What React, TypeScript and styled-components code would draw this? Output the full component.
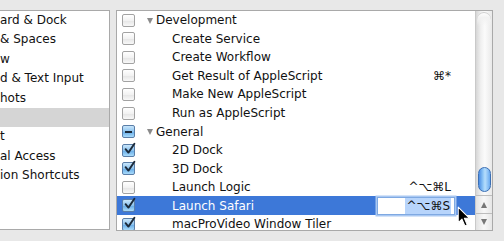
import * as React from 'react';
import styled, { createGlobalStyle } from 'styled-components';

const GlobalStyle = createGlobalStyle`
  html, body {
    margin: 0;
    padding: 0;
    background: #e8e8e8;
    overflow: hidden;
  }
  body {
    font-family: 'DejaVu Sans', 'Liberation Sans', sans-serif;
    font-size: 12px;
    color: #111;
  }
`;

// the sidebar is scrolled sideways, only the tail of each name is in view
const categories = [
  'ard & Dock',
  '& Spaces',
  'w',
  'd & Text Input',
  'hots',
  '',
  't',
  'al Access',
  'ion Shortcuts',
];

type Check = 'off' | 'on' | 'mixed';

type Item = {
  label: string;
  check: Check;
  group?: boolean;
  shortcut?: string;
  selected?: boolean;
  editing?: boolean;
};

const items: Item[] = [
  { label: 'Development', check: 'off', group: true },
  { label: 'Create Service', check: 'off' },
  { label: 'Create Workflow', check: 'off' },
  { label: 'Get Result of AppleScript', check: 'off', shortcut: '⌘*' },
  { label: 'Make New AppleScript', check: 'off' },
  { label: 'Run as AppleScript', check: 'off' },
  { label: 'General', check: 'mixed', group: true },
  { label: '2D Dock', check: 'on' },
  { label: '3D Dock', check: 'on' },
  { label: 'Launch Logic', check: 'off', shortcut: '^⌥⌘L' },
  { label: 'Launch Safari', check: 'on', shortcut: '^⌥⌘S', selected: true, editing: true },
  { label: 'macProVideo Window Tiler', check: 'on' },
];

const CheckBox = ({ state }: { state: Check }) => (
  <Box $on={state !== 'off'}>
    {state === 'on' && (
      <svg width="13" height="13" viewBox="0 0 13 13">
        <path d="M2.6 6.2 L5.4 9.6 L11.4 0.8" fill="none" stroke="#1b2a3a" strokeWidth="1.9" strokeLinecap="round" strokeLinejoin="round" />
      </svg>
    )}
    {state === 'mixed' && <Dash />}
  </Box>
);

const Pointer = () => (
  <Cursor width="15" height="23" viewBox="0 0 14 22">
    <path d="M1 1 L1 16 L4.6 12.6 L7.4 19 L9.6 18 L6.9 11.8 L11.8 11.8 Z" fill="#000" stroke="#fff" strokeWidth="1" strokeLinejoin="round" />
  </Cursor>
);

const App = () => {
  return (
    <>
      <GlobalStyle />
      <Window>
        <Sidebar>
          {categories.map((c, i) => (
            <SidebarRow key={i} $selected={i === 5}>
              {c}
            </SidebarRow>
          ))}
        </Sidebar>
        <Table>
          <Rows>
            {items.map((it) => (
              <Row key={it.label} $selected={!!it.selected}>
                <CheckCell>
                  <CheckBox state={it.check} />
                </CheckCell>
                {it.group ? <Disclosure /> : <Indent />}
                <Label>{it.label}</Label>
                {it.editing ? (
                  <Field>
                    <FieldText>{it.shortcut}</FieldText>
                  </Field>
                ) : (
                  <Shortcut>{it.shortcut}</Shortcut>
                )}
              </Row>
            ))}
          </Rows>
          <ScrollBar>
            <Track>
              <TrackCap />
              <Thumb />
            </Track>
            <ArrowButton>
              <ArrowUp />
            </ArrowButton>
            <ArrowButton $last>
              <ArrowDown />
            </ArrowButton>
          </ScrollBar>
        </Table>
        <Pointer />
      </Window>
    </>
  );
};

export default App;

const Window = styled.div`
  position: relative;
  display: flex;
  align-items: flex-start;
  gap: 6px;
  width: 504px;
  height: 241px;
  padding-top: 10px;
  box-sizing: border-box;
`;

const Sidebar = styled.div`
  width: 110px;
  height: 220px;
  box-sizing: border-box;
  background: #fff;
  border: 1px solid #a9a9a9;
  border-left: none;
  overflow: hidden;
`;

const SidebarRow = styled.div<{ $selected: boolean }>`
  height: 19.4px;
  line-height: 19.4px;
  white-space: nowrap;
  padding-left: 0;
  background: ${(p) => (p.$selected ? '#d5d5d5' : 'transparent')};
`;

const Table = styled.div`
  display: flex;
  width: 377px;
  height: 221px;
  box-sizing: border-box;
  border: 1px solid #a9a9a9;
  background: #fff;
  overflow: hidden;
`;

const Rows = styled.div`
  flex: 1;
  display: flex;
  flex-direction: column;
`;

const Row = styled.div<{ $selected: boolean }>`
  display: flex;
  align-items: center;
  height: 18.55px;
  flex-shrink: 0;
  white-space: nowrap;
  background: ${(p) => (p.$selected ? '#3d78d8' : 'transparent')};
  color: ${(p) => (p.$selected ? '#fff' : '#111')};
`;

const CheckCell = styled.div`
  width: 30px;
  padding-left: 5px;
  box-sizing: border-box;
  display: flex;
  align-items: center;
`;

const Box = styled.div<{ $on: boolean }>`
  width: 13px;
  height: 13px;
  box-sizing: border-box;
  border-radius: 2px;
  border: 1px solid ${(p) => (p.$on ? '#5a7ea8' : '#a2a2a2')};
  background: ${(p) =>
    p.$on
      ? 'linear-gradient(#c9e6fb 0%, #8cc3ef 50%, #6aaee8 55%, #a9dbfb 100%)'
      : 'linear-gradient(#ffffff 0%, #f2f2f2 50%, #e6e6e6 55%, #f8f8f8 100%)'};
  display: flex;
  align-items: center;
  justify-content: center;
  svg {
    overflow: visible;
    margin-top: -2px;
    margin-left: 1px;
  }
`;

const Dash = styled.div`
  width: 7px;
  height: 2px;
  background: #1b2a3a;
`;

const Disclosure = styled.div`
  width: 0;
  height: 0;
  border-left: 3.5px solid transparent;
  border-right: 3.5px solid transparent;
  border-top: 6px solid #8a8a8a;
  margin-right: 3px;
  margin-top: 1px;
`;

const Indent = styled.div`
  width: 25px;
`;

const Label = styled.div`
  flex: 1;
`;

const Shortcut = styled.div`
  padding-right: 24px;
`;

const Field = styled.div`
  width: 78px;
  height: 18px;
  margin-right: 20px;
  box-sizing: border-box;
  background: #fff;
  border: 1px solid #7fa9e2;
  box-shadow: 0 0 0 1.5px #a9c8f2;
  display: flex;
  justify-content: flex-end;
  align-items: center;
  padding-right: 3px;
`;

const FieldText = styled.span`
  background: #b7d4fb;
  color: #111;
  padding: 1px 1px 1px 2px;
  line-height: 14px;
`;

const ScrollBar = styled.div`
  width: 16px;
  display: flex;
  flex-direction: column;
  border-left: 1px solid #c9c9c9;
`;

const Track = styled.div`
  flex: 1;
  display: flex;
  flex-direction: column;
  justify-content: space-between;
  align-items: center;
  background: linear-gradient(90deg, #d6d6d6 0%, #f0f0f0 30%, #fbfbfb 55%, #e9e9e9 100%);
  padding-bottom: 3px;
`;

const TrackCap = styled.div`
  width: 14px;
  height: 14px;
  margin-top: 1px;
  border-radius: 7px 7px 0 0;
  background: linear-gradient(180deg, #ffffff 0%, #f2f2f2 40%, rgba(240, 240, 240, 0) 100%);
  box-shadow: inset 0 1px 0 #cfcfcf;
`;

const Thumb = styled.div`
  width: 13px;
  height: 25px;
  box-sizing: border-box;
  border-radius: 7px;
  border: 1px solid #3b6fb4;
  background: linear-gradient(90deg, #4c8de4 0%, #8cc4f6 35%, #b7defc 55%, #6aaaf0 100%);
`;

const ArrowButton = styled.div<{ $last?: boolean }>`
  height: ${(p) => (p.$last ? '16px' : '17px')};
  display: flex;
  align-items: center;
  justify-content: center;
  border-top: 1px solid #bdbdbd;
  background: linear-gradient(90deg, #e2e2e2 0%, #f8f8f8 50%, #e6e6e6 100%);
`;

const ArrowUp = styled.div`
  width: 0;
  height: 0;
  border-left: 3px solid transparent;
  border-right: 3px solid transparent;
  border-bottom: 6px solid #777;
`;

const ArrowDown = styled.div`
  width: 0;
  height: 0;
  border-left: 3px solid transparent;
  border-right: 3px solid transparent;
  border-top: 6px solid #777;
`;

const Cursor = styled.svg`
  position: absolute;
  left: 457px;
  top: 206px;
`;
